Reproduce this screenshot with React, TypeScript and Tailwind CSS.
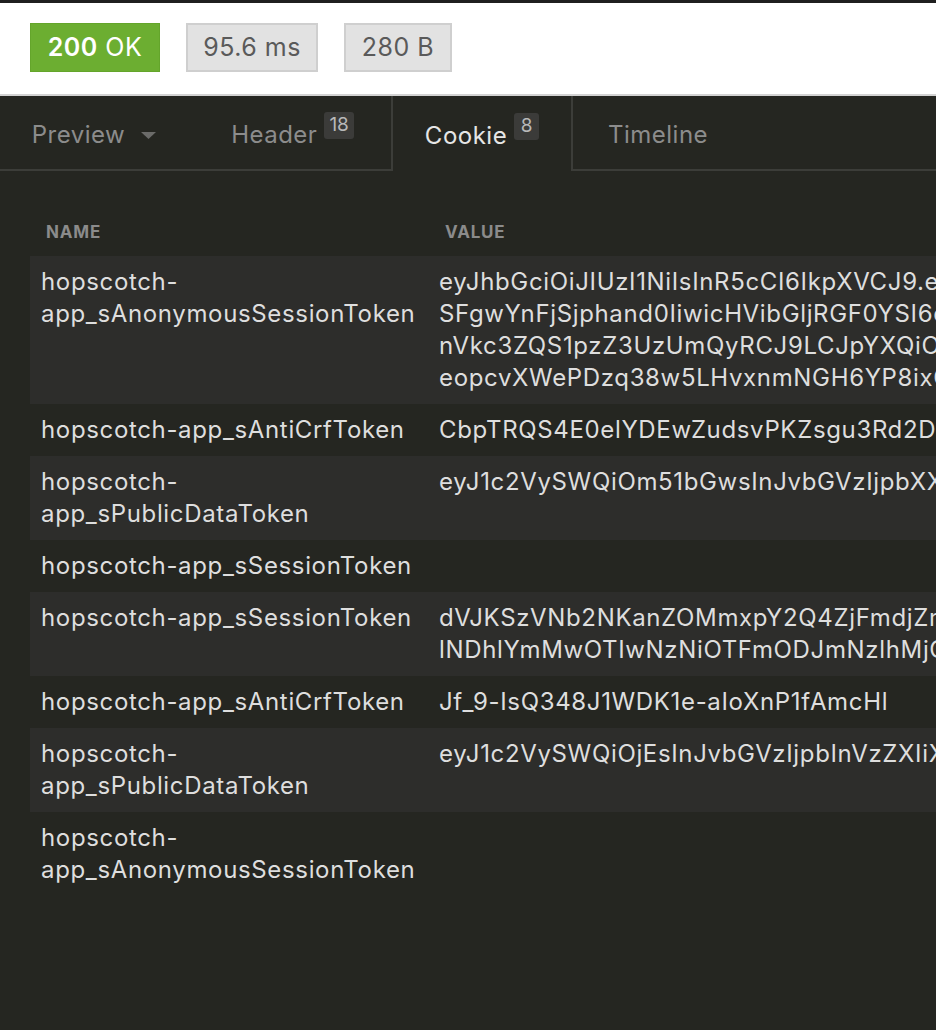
import React from 'react';

type Cookie = {
  name: string[];
  value: string[];
};

const cookies: Cookie[] = [
  {
    name: ['hopscotch-', 'app_sAnonymousSessionToken'],
    value: [
      'eyJhbGciOiJIUzI1NiIsInR5cCI6IkpXVCJ9.eyJkYXRhIjp7',
      'SFgwYnFjSjphand0IiwicHVibGljRGF0YSI6eyJ1',
      'nVkc3ZQS1pzZ3UzUmQyRCJ9LCJpYXQiOjE1OD',
      'eopcvXWePDzq38w5LHvxnmNGH6YP8ixQ2aT',
    ],
  },
  { name: ['hopscotch-app_sAntiCrfToken'], value: ['CbpTRQS4E0elYDEwZudsvPKZsgu3Rd2DfVw'] },
  {
    name: ['hopscotch-', 'app_sPublicDataToken'],
    value: ['eyJ1c2VySWQiOm51bGwsInJvbGVzIjpbXX0='],
  },
  { name: ['hopscotch-app_sSessionToken'], value: [] },
  {
    name: ['hopscotch-app_sSessionToken'],
    value: ['dVJKSzVNb2NKanZOMmxpY2Q4ZjFmdjZmNW', 'lNDhlYmMwOTIwNzNiOTFmODJmNzlhMjQ1'],
  },
  { name: ['hopscotch-app_sAntiCrfToken'], value: ['Jf_9-IsQ348J1WDK1e-aIoXnP1fAmcHl'] },
  {
    name: ['hopscotch-', 'app_sPublicDataToken'],
    value: ['eyJ1c2VySWQiOjEsInJvbGVzIjpbInVzZXIiXX0='],
  },
  { name: ['hopscotch-', 'app_sAnonymousSessionToken'], value: [] },
];

function TabCount({ n }: { n: number }) {
  return (
    <span className="ml-[7px] -mt-[20px] inline-flex h-[27px] min-w-[25px] items-center justify-center rounded-[3px] bg-[#3b3b39] px-[5px] text-[19px] tracking-normal text-[#b8b8b8]">
      {n}
    </span>
  );
}

export default function App() {
  return (
    <div className="h-[1030px] w-[936px] overflow-hidden bg-[#252621] font-['Inter',sans-serif] tracking-[0.5px]">
      {/* status bar */}
      <div className="flex h-[96px] items-center gap-[26px] border-t-[3px] border-b-2 border-t-[#1f1f1f] border-b-[#d3d3d3] bg-white px-[30px] pb-[2px]">
        <div className="flex h-[49px] w-[130px] items-center justify-center border border-[#64a52b] bg-[#6cae31] text-[25px] text-white">
          <span className="font-semibold">200</span>&nbsp;OK
        </div>
        <div className="flex h-[49px] w-[132px] items-center justify-center border-2 border-[#cfcfcf] bg-[#e2e2e2] text-[25px] text-[#5a5a5a]">
          95.6 ms
        </div>
        <div className="flex h-[49px] w-[108px] items-center justify-center border-2 border-[#cfcfcf] bg-[#e2e2e2] text-[25px] text-[#5a5a5a]">
          280 B
        </div>
      </div>

      {/* tabs */}
      <div className="flex h-[75px] text-[24px]">
        <div className="flex w-[194px] items-center justify-center border-b-2 border-[#3c3d39] pt-[5px] pr-[6px] text-[#8c8c8c]">
          Preview
          <svg className="ml-[16px]" width="15" height="7" viewBox="0 0 15 7">
            <path d="M0 0h15L7.5 7z" fill="#6b6b69" />
          </svg>
        </div>
        <div className="flex w-[199px] items-center justify-center border-r-2 border-b-2 border-[#3c3d39] pt-[5px] text-[#8c8c8c]">
          Header
          <TabCount n={18} />
        </div>
        <div className="flex w-[180px] items-center justify-center border-r-2 border-[#3c3d39] pt-[5px] text-[#e6e6e6]">
          Cookie
          <TabCount n={8} />
        </div>
        <div className="flex w-[170px] items-center justify-center border-b-2 border-[#3c3d39] pt-[5px] text-[#8c8c8c]">
          Timeline
        </div>
        <div className="flex-1 border-b-2 border-[#3c3d39]" />
      </div>

      {/* cookie table */}
      <div className="w-[1400px] pl-[30px] pt-[44px]">
        <div className="flex h-[41px] items-center pb-[6px] text-[17px] font-bold tracking-[0.8px] text-[#8b8b8b]">
          <div className="w-[398px] pl-[16px]">NAME</div>
          <div className="pl-[17px]">VALUE</div>
        </div>
        {cookies.map((c, i) => (
          <div
            key={i}
            className={`flex py-[10px] text-[24px] leading-[32px] tracking-[0.65px] text-[#dedede] ${i % 2 === 0 ? 'bg-[#2d2d2b]' : ''}`}
          >
            <div className="w-[398px] shrink-0 whitespace-nowrap pl-[11px]">
              {c.name.map((l) => (
                <div key={l}>{l}</div>
              ))}
            </div>
            <div className="whitespace-nowrap pl-[11px]">
              {c.value.map((l) => (
                <div key={l}>{l}</div>
              ))}
            </div>
          </div>
        ))}
      </div>
    </div>
  );
}
